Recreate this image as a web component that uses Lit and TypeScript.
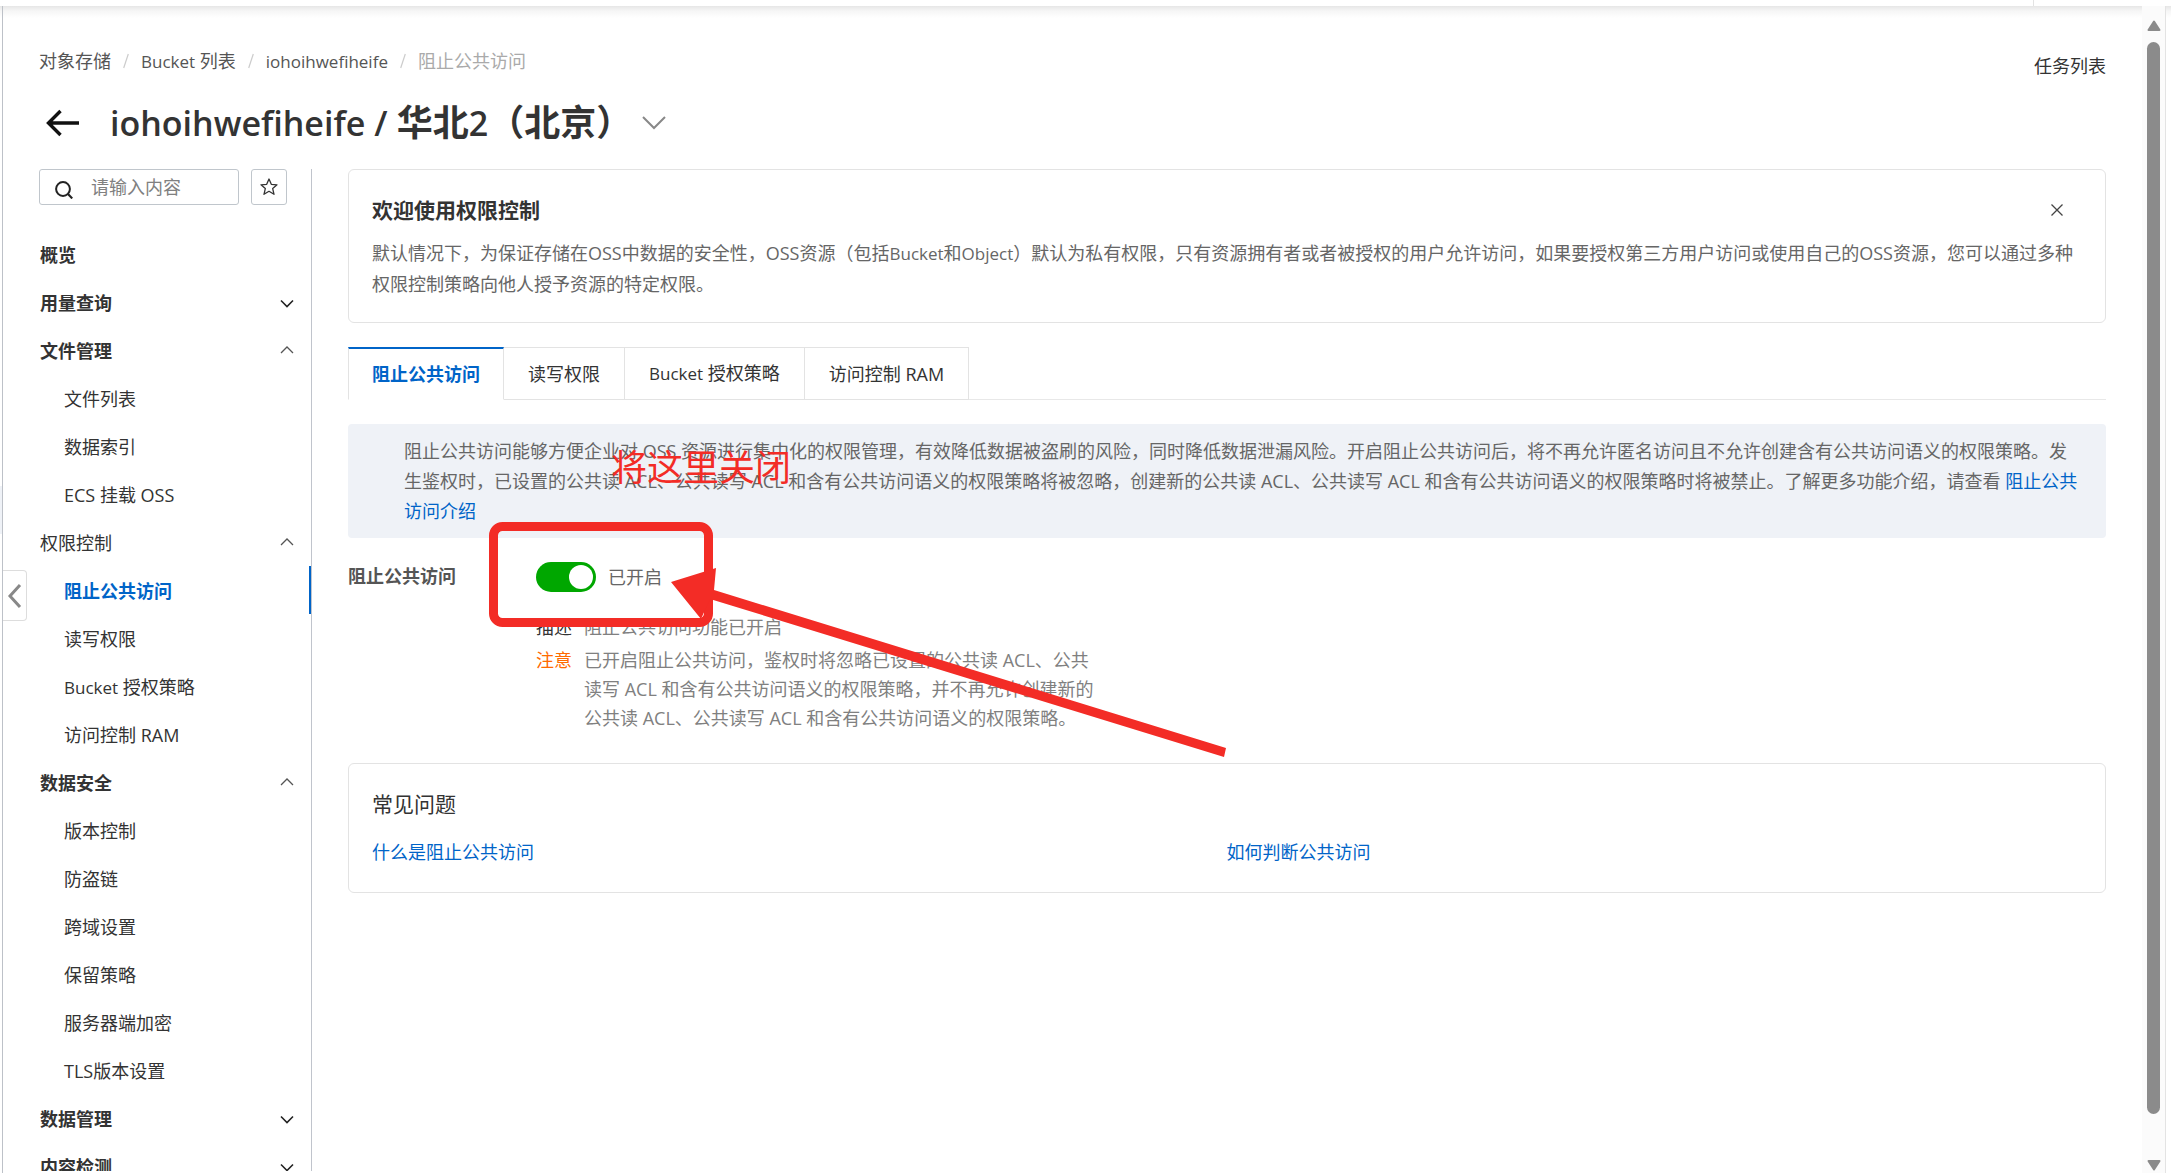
import { LitElement, html, css, svg } from "lit";
import { customElement, state } from "lit/decorators.js";
import { classMap } from "lit/directives/class-map.js";

interface NavGroup {
  label: string;
  open?: boolean;
  plain?: boolean;
  leaf?: boolean;
  items?: string[];
}

const NAV: NavGroup[] = [
  { label: "概览", leaf: true },
  { label: "用量查询" },
  { label: "文件管理", open: true, items: ["文件列表", "数据索引", "ECS 挂载 OSS"] },
  {
    label: "权限控制",
    open: true,
    plain: true,
    items: ["阻止公共访问", "读写权限", "Bucket 授权策略", "访问控制 RAM"],
  },
  {
    label: "数据安全",
    open: true,
    items: ["版本控制", "防盗链", "跨域设置", "保留策略", "服务器端加密", "TLS版本设置"],
  },
  { label: "数据管理" },
  { label: "内容检测" },
];

const TABS = ["阻止公共访问", "读写权限", "Bucket 授权策略", "访问控制 RAM"];

const icon = (w: number, h: number, body: unknown) =>
  html`<svg width=${w} height=${h} viewBox="0 0 ${w} ${h}" fill="none" aria-hidden="true">${body}</svg>`;

const chevronDown = icon(14, 10, svg`<path d="M1 2.500l6 6 6-6" stroke="#222" stroke-width="1.600"/>`);
const chevronUp = icon(14, 10, svg`<path d="M1 7l6-6 6 6" stroke="#555" stroke-width="1.300"/>`);

/* Latin words are set one size below the Chinese text around them. */
const mixed = (text: string) =>
  text
    .split(/([A-Za-z]*[a-z]+)/)
    .map((part) => (/[a-z]/.test(part) ? html`<span class="latin">${part}</span>` : part));

const latinStyles = css`
  .latin {
    font-size: 17px;
  }
`;

@customElement("side-nav")
class SideNav extends LitElement {
  static styles = [
    latinStyles,
    css`
      :host {
        display: block;
        width: 272px;
        flex: none;
        border-right: 1px solid #c0c4cc;
        overflow: hidden;
        font-size: 18px;
        color: #333;
      }
      .search {
        display: flex;
        gap: 12px;
        margin-bottom: 25px;
      }
      .field {
        display: flex;
        align-items: center;
        width: 200px;
        height: 36px;
        box-sizing: border-box;
        border: 1px solid #c0c6cc;
        border-radius: 3px;
        padding-left: 15px;
        gap: 18px;
      }
      .field input {
        width: 120px;
        border: 0;
        padding: 0;
        outline: 0;
        font: inherit;
        background: none;
        color: #333;
      }
      .field input::placeholder {
        color: #808080;
        opacity: 1;
      }
      .field svg {
        margin-top: 6px;
      }
      .star {
        width: 36px;
        height: 36px;
        padding: 0;
        border: 1px solid #c0c6cc;
        border-radius: 3px;
        background: #fff;
        display: grid;
        place-items: center;
      }
      ul {
        list-style: none;
        margin: 0;
        padding: 0;
      }
      .row {
        display: flex;
        align-items: center;
        justify-content: space-between;
        box-sizing: border-box;
        width: 100%;
        height: 48px;
        padding: 2px 17px 0 1px;
        border: 0;
        background: none;
        font: inherit;
        font-weight: 700;
        color: #333;
        text-decoration: none;
        text-align: left;
      }
      .plain {
        font-weight: 400;
      }
      .item {
        padding-left: 25px;
        font-weight: 400;
      }
      .active {
        color: #0064c8;
        font-weight: 700;
        border-right: 2px solid #0064c8;
      }
    `,
  ];

  @state() private active = "阻止公共访问";

  render() {
    return html`
      <div class="search">
        <label class="field">
          ${icon(
            18,
            18,
            svg`<circle cx="8" cy="8" r="6.900" stroke="#222" stroke-width="2"/><path d="M13 13l4.200 4.400" stroke="#222" stroke-width="2.200"/>`,
          )}
          <input type="text" placeholder="请输入内容" aria-label="请输入内容" />
        </label>
        <button class="star" aria-label="收藏">
          ${icon(
            20,
            20,
            svg`<path d="M10 2l2.300 5.300 5.700.5-4.300 3.800 1.300 5.700-5-3-5 3 1.300-5.700L2 7.800l5.700-.5z" stroke="#333" stroke-width="1.300" stroke-linejoin="round"/>`,
          )}
        </button>
      </div>
      <nav>
        <ul>
          ${NAV.map(
            (g) => html`<li>
              ${g.leaf
                ? html`<a class="row" href="#">${g.label}</a>`
                : html`<button class=${classMap({ row: true, plain: !!g.plain })} aria-expanded=${g.open ? "true" : "false"}>
                    ${g.label}${g.open ? chevronUp : chevronDown}
                  </button>`}
              ${g.items
                ? html`<ul>
                    ${g.items.map(
                      (i) => html`<li>
                        <a
                          class=${classMap({ row: true, item: true, active: i === this.active })}
                          href="#"
                          @click=${() => (this.active = i)}
                          ><span>${mixed(i)}</span></a
                        >
                      </li>`,
                    )}
                  </ul>`
                : ""}
            </li>`,
          )}
        </ul>
      </nav>
    `;
  }
}

@customElement("access-panel")
class AccessPanel extends LitElement {
  static styles = css`
    :host {
      display: block;
      position: relative;
      color: #666;
    }
    .notice {
      background: #eff2f7;
      border-radius: 4px;
      padding: 12px 24px 12px 56px;
      line-height: 30px;
    }
    .notice p {
      margin: 0;
    }
    a {
      color: #0064c8;
      text-decoration: none;
    }
    .form {
      display: grid;
      grid-template-columns: 188px 1fr;
      padding-top: 24px;
    }
    .label {
      font-weight: 700;
      color: #555;
      line-height: 28px;
    }
    .toggle {
      display: flex;
      align-items: center;
      gap: 12px;
      height: 30px;
      margin-bottom: 21px;
    }
    .switch {
      appearance: none;
      margin: 0;
      width: 60px;
      height: 30px;
      border-radius: 15px;
      background: #00a700;
      display: flex;
      align-items: center;
      justify-content: flex-end;
      padding: 0 3px;
    }
    .switch::before {
      content: "";
      width: 24px;
      height: 24px;
      border-radius: 50%;
      background: #fff;
    }
    dl {
      display: grid;
      grid-template-columns: 36px 516px;
      column-gap: 12px;
      row-gap: 4px;
      margin: 0;
      line-height: 29px;
      color: #808080;
    }
    dt {
      color: #333;
    }
    .warn {
      color: #ff6a00;
    }
    dd {
      margin: 0;
    }
    .marks {
      position: absolute;
      left: 0;
      top: 0;
      pointer-events: none;
    }
    .remark {
      position: absolute;
      left: 263px;
      top: 24px;
      font-size: 36px;
      line-height: 40px;
      color: #f32c26;
      white-space: nowrap;
    }
  `;

  render() {
    return html`
      <div class="notice">
        <p>
          阻止公共访问能够方便企业对 OSS
          资源进行集中化的权限管理，有效降低数据被盗刷的风险，同时降低数据泄漏风险。开启阻止公共访问后，将不再允许匿名访问且不允许创建含有公共访问语义的权限策略。发生鉴权时，已设置的公共读
          ACL、公共读写 ACL 和含有公共访问语义的权限策略将被忽略，创建新的公共读 ACL、公共读写 ACL
          和含有公共访问语义的权限策略时将被禁止。了解更多功能介绍，请查看
          <a href="#">阻止公共访问介绍</a>
        </p>
      </div>
      <div class="form">
        <label class="label" for="block">阻止公共访问</label>
        <div>
          <div class="toggle">
            <input class="switch" id="block" type="checkbox" role="switch" checked />
            <span>已开启</span>
          </div>
          <dl>
            <dt>描述</dt>
            <dd>阻止公共访问功能已开启</dd>
            <dt class="warn">注意</dt>
            <dd>
              已开启阻止公共访问，鉴权时将忽略已设置的公共读 ACL、公共读写 ACL
              和含有公共访问语义的权限策略，并不再允许创建新的公共读 ACL、公共读写 ACL
              和含有公共访问语义的权限策略。
            </dd>
          </dl>
        </div>
      </div>
      <svg class="marks" width="890" height="340" viewBox="0 0 890 340" aria-hidden="true">
        <rect x="145.500" y="102.500" width="215" height="96" rx="9" fill="none" stroke="#f32c26" stroke-width="9" />
        <path d="M323 158L368 144L366 166L878 324L876 333L362 175L353 195Z" fill="#f32c26" />
      </svg>
      <span class="remark">将这里关闭</span>
    `;
  }
}

@customElement("app-root")
class AppRoot extends LitElement {
  static styles = [
    css`
      :host {
        display: flex;
        flex-direction: column;
        height: 100vh;
        overflow: hidden;
        background: #fff;
        font-family: "Open Sans", "Noto Sans CJK SC", sans-serif;
        font-size: 18px;
        line-height: 30px;
        color: #333;
      }
      a {
        color: inherit;
        text-decoration: none;
      }
      button {
        font: inherit;
        color: inherit;
        background: none;
        border: 0;
        padding: 0;
      }
      .topbar {
        flex: none;
        height: 6px;
        display: flex;
        justify-content: flex-end;
      }
      .topbar i {
        width: 137px;
        border-left: 1px solid #e3e3e3;
      }
      .frame {
        flex: 1;
        min-height: 0;
        display: flex;
        background: linear-gradient(#e6e6e6, #f6f6f6 5px, #fff 12px) no-repeat;
      }
      .edge {
        width: 2px;
        flex: none;
        border-right: 1px solid #bdc1c8;
        padding-top: 480px;
      }
      .edge i {
        display: block;
        height: 48px;
        background: #eff2f7;
      }
      .page {
        flex: 1;
        min-width: 0;
        position: relative;
        display: flex;
        flex-direction: column;
        padding: 40px 36px 0;
      }
      .handle {
        position: absolute;
        left: 0;
        top: 564px;
        width: 24px;
        height: 51px;
        box-sizing: border-box;
        border: 1px solid #ddd;
        border-left: 0;
        border-radius: 0 4px 4px 0;
        background: #fff;
        display: grid;
        place-items: center;
      }
      .top {
        display: flex;
        justify-content: space-between;
        height: 44px;
      }
      .crumbs {
        display: flex;
        gap: 12px;
      }
      .crumbs svg {
        margin-top: 7px;
      }
      .crumbs a {
        color: #555;
      }
      .crumbs .current {
        color: #aaa;
      }
      .tasks {
        padding-top: 5px;
      }
      .heading {
        display: flex;
        align-items: center;
        height: 66px;
        margin-bottom: 13px;
        padding-left: 5px;
      }
      .heading button {
        display: flex;
      }
      h1 {
        margin: 0 10px 0 30px;
        font-size: 36px;
        line-height: 48px;
        font-weight: 700;
      }
      h1 .name {
        font-size: 34px;
        font-weight: 600;
      }
      .body {
        flex: 1;
        min-height: 0;
        display: flex;
        gap: 36px;
        margin-bottom: 2px;
      }
      main {
        flex: 1;
        min-width: 0;
      }
      .card {
        box-sizing: border-box;
        border: 1px solid #e3e3e3;
        border-radius: 6px;
        padding: 24px 24px 0 23px;
      }
      .welcome {
        min-height: 154px;
        color: #666;
      }
      .cardhead {
        display: flex;
        justify-content: space-between;
        align-items: center;
        padding: 0 18px 12px 0;
        color: #333;
      }
      h2 {
        margin: 0;
        font-size: 21px;
        line-height: 32px;
        font-weight: 700;
      }
      p {
        margin: 0;
      }
      .close {
        display: grid;
        place-items: center;
        width: 12px;
        height: 30px;
      }
      .tabs {
        display: flex;
        margin: 24px 0;
        border-bottom: 1px solid #e8e8e8;
      }
      .tab {
        height: 53px;
        box-sizing: border-box;
        padding: 0 24px;
        border: 1px solid #e3e3e3;
        border-left: 0;
        margin-bottom: -1px;
      }
      .on {
        border: 1px solid #e3e3e3;
        border-top: 2px solid #0064c8;
        border-bottom-color: #fff;
        padding: 0 23px;
        color: #0064c8;
        font-weight: 700;
      }
      .faq {
        margin-top: 30px;
        min-height: 130px;
      }
      .faq h2 {
        font-weight: 400;
        margin-bottom: 17px;
      }
      .links {
        display: grid;
        grid-template-columns: 1fr 1fr;
        color: #0064c8;
      }
      .scroll {
        flex: none;
        width: 24px;
        display: flex;
        flex-direction: column;
        align-items: center;
        box-sizing: border-box;
        padding: 14px 0 2px;
        background: #fbfbfb;
        border-right: 1px solid #e3e3e3;
        margin-right: 5px;
      }
      .thumb {
        flex: 1;
        width: 13px;
        border-radius: 7px;
        background: #8b8b8b;
        margin: 11px 0 46px;
      }
    `,
    latinStyles,
  ];

  @state() private tab = 0;

  render() {
    const slash = icon(6, 16, svg`<path d="M5.300 1L.7 15" stroke="#ccc" stroke-width="1.200"/>`);
    return html`
      <div class="topbar"><i></i></div>
      <div class="frame">
        <div class="edge"><i></i></div>
        <div class="page">
          <div class="top">
            <nav class="crumbs">
              <a href="#">对象存储</a>${slash}<a href="#">${mixed("Bucket 列表")}</a>${slash}<a href="#"
                >${mixed("iohoihwefiheife")}</a
              >${slash}<span class="current">阻止公共访问</span>
            </nav>
            <a class="tasks" href="#">任务列表</a>
          </div>
          <div class="heading">
            <button aria-label="返回">
              ${icon(36, 28, svg`<path d="M16.500 2L4.500 14l12 12M4.500 14h30.500" stroke="#111" stroke-width="3.400"/>`)}
            </button>
            <h1><span class="name">iohoihwefiheife /</span> 华北<span class="name">2</span>（北京）</h1>
            <button aria-label="切换">
              ${icon(24, 14, svg`<path d="M1 1l11 11L23 1" stroke="#888" stroke-width="2"/>`)}
            </button>
          </div>
          <div class="body">
            <side-nav></side-nav>
            <main>
              <section class="card welcome">
                <div class="cardhead">
                  <h2>欢迎使用权限控制</h2>
                  <button class="close" aria-label="关闭">
                    ${icon(12, 12, svg`<path d="M.5.5l11 11M11.500.5l-11 11" stroke="#444" stroke-width="1.300"/>`)}
                  </button>
                </div>
                <p>
                  ${mixed(
                    "默认情况下，为保证存储在OSS中数据的安全性，OSS资源（包括Bucket和Object）默认为私有权限，只有资源拥有者或者被授权的用户允许访问，如果要授权第三方用户访问或使用自己的OSS资源，您可以通过多种权限控制策略向他人授予资源的特定权限。",
                  )}
                </p>
              </section>
              <div class="tabs" role="tablist">
                ${TABS.map(
                  (t, i) =>
                    html`<button
                      role="tab"
                      aria-selected=${i === this.tab ? "true" : "false"}
                      class=${classMap({ tab: true, on: i === this.tab })}
                      @click=${() => (this.tab = i)}
                    >
                      ${mixed(t)}
                    </button>`,
                )}
              </div>
              <access-panel></access-panel>
              <section class="card faq">
                <h2>常见问题</h2>
                <div class="links">
                  <a href="#">什么是阻止公共访问</a>
                  <a href="#">如何判断公共访问</a>
                </div>
              </section>
            </main>
          </div>
          <button class="handle" aria-label="收起">
            ${icon(16, 26, svg`<path d="M13 2L3 13l10 11" stroke="#888" stroke-width="3"/>`)}
          </button>
        </div>
        <div class="scroll">
          ${icon(14, 11, svg`<path d="M7 1.500L12.500 10h-11z" fill="#8b8b8b" stroke="#8b8b8b" stroke-width="2" stroke-linejoin="round"/>`)}
          <div class="thumb"></div>
          ${icon(14, 11, svg`<path d="M7 9.500L1.500 1h11z" fill="#8b8b8b" stroke="#8b8b8b" stroke-width="2" stroke-linejoin="round"/>`)}
        </div>
      </div>
    `;
  }
}
